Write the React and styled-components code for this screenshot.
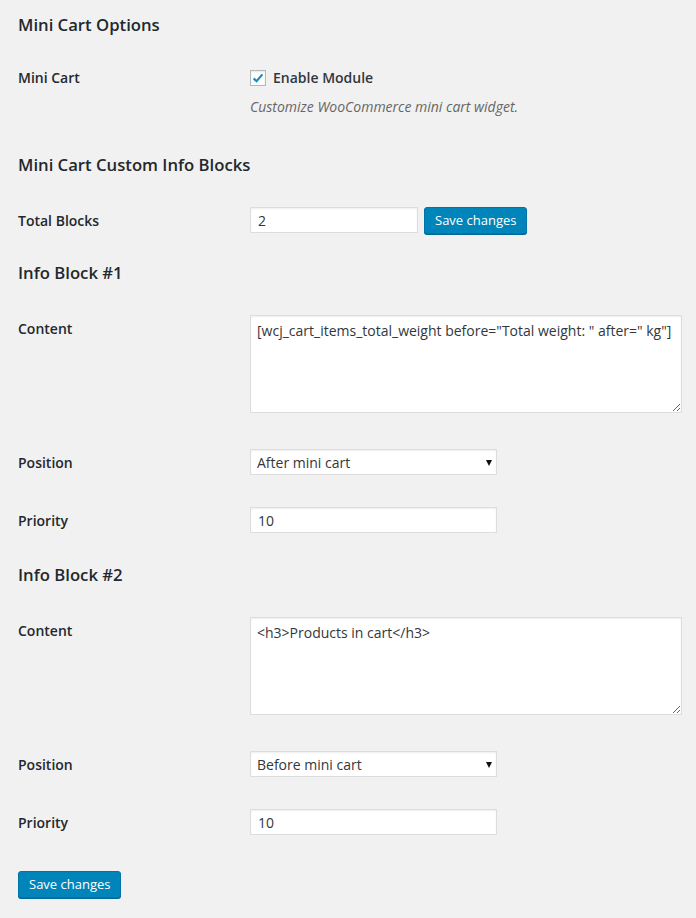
import React from 'react';
import styled, { createGlobalStyle } from 'styled-components';

const GlobalStyle = createGlobalStyle`
    html, body {
        margin: 0;
        padding: 0;
        background: #f1f1f1;
    }
    body {
        font-family: "Open Sans", "Liberation Sans", sans-serif;
        color: #23282d;
    }
`

const Page = styled.div`
    width: 696px;
    min-height: 918px;
    box-sizing: border-box;
    padding: 0 0 0 18px;
`

const Heading = styled.h2`
    margin: ${p => p.$top}px 0 ${p => p.$bottom}px;
    font-size: 16.7px;
    font-weight: 600;
    line-height: 22px;
    color: #23282d;
`

const Row = styled.div`
    display: grid;
    grid-template-columns: 232px 1fr;
    min-height: 58px;
`

const Label = styled.div`
    padding: ${p => p.$pad || 20}px 0 20px;
    font-size: 14px;
    font-weight: 600;
    line-height: 18px;
`

const Field = styled.div`
    padding: ${p => p.$pad || 15}px 0 15px;
    display: flex;
    flex-direction: column;
    align-items: flex-start;
`

const Inline = styled.div`
    display: flex;
    align-items: flex-start;
    gap: 6px;
`

const CheckLabel = styled.label`
    display: flex;
    align-items: center;
    gap: 7px;
    font-size: 14px;
    line-height: 18px;
    font-weight: 600;
    color: #32373c;
`

const Box = styled.span`
    width: 16px;
    height: 16px;
    box-sizing: border-box;
    border: 1px solid #b4b9be;
    background: #fff;
    box-shadow: inset 0 1px 2px rgba(0,0,0,.1);
    display: flex;
    align-items: center;
    justify-content: center;
`

const Description = styled.p`
    margin: 11px 0 0;
    font-size: 14px;
    line-height: 18px;
    font-style: italic;
    color: #666;
`

const Input = styled.input`
    width: ${p => p.$w}px;
    height: 26px;
    box-sizing: border-box;
    margin: 0;
    padding: 0 7px;
    border: 1px solid #ddd;
    background: #fff;
    box-shadow: inset 0 1px 2px rgba(0,0,0,.07);
    font-family: inherit;
    font-size: 14px;
    color: #32373c;
    outline: none;
`

const TextArea = styled.textarea`
    display: block;
    width: 432px;
    height: 98px;
    box-sizing: border-box;
    margin: 0 0 6px;
    padding: 5px 6px;
    border: 1px solid #ddd;
    background: #fff;
    box-shadow: inset 0 1px 2px rgba(0,0,0,.07);
    font-family: inherit;
    font-size: 14px;
    line-height: 20px;
    color: #32373c;
    outline: none;
`

const SelectWrap = styled.div`
    position: relative;
    width: 247px;
    &::after {
        content: "";
        position: absolute;
        right: 5px;
        top: 11px;
        border-left: 3.5px solid transparent;
        border-right: 3.5px solid transparent;
        border-top: 6px solid #111;
        pointer-events: none;
    }
`

const Select = styled.select`
    appearance: none;
    width: 247px;
    height: 26px;
    box-sizing: border-box;
    margin: 0;
    padding: 0 6px;
    border: 1px solid #ddd;
    border-radius: 0;
    background: #fff;
    box-shadow: inset 0 1px 2px rgba(0,0,0,.07);
    font-family: inherit;
    font-size: 14px;
    color: #32373c;
    outline: none;
`

const Button = styled.button`
    height: 27px;
    box-sizing: border-box;
    margin: ${p => p.$top || 0}px 0 0;
    padding: 0 10px 1px;
    border: 1px solid #0073aa;
    border-radius: 3px;
    background: #0085ba;
    box-shadow: 0 1px 0 #006799;
    color: #fff;
    font-family: inherit;
    font-size: 13px;
    line-height: 24px;
    cursor: pointer;
`

const Check = () => (
    <svg width="12" height="12" viewBox="0 0 12 12">
        <path d="M1.6 6.4 L4.6 9.2 L10.4 2.4" fill="none" stroke="#1e8cbe" strokeWidth="2.2" />
    </svg>
)

function InfoBlock({ num, content, position, top }) {
    return (
        <>
            <Heading $top={top} $bottom={16}>Info Block #{num}</Heading>
            <Row>
                <Label>Content</Label>
                <Field>
                    <TextArea defaultValue={content} />
                </Field>
            </Row>
            <Row>
                <Label>Position</Label>
                <Field>
                    <SelectWrap>
                        <Select defaultValue={position}>
                            <option>Before mini cart</option>
                            <option>After mini cart</option>
                        </Select>
                    </SelectWrap>
                </Field>
            </Row>
            <Row>
                <Label>Priority</Label>
                <Field>
                    <Input $w={247} defaultValue="10" />
                </Field>
            </Row>
        </>
    )
}

export default function App() {
    return (
        <Page>
            <GlobalStyle />
            <Heading $top={14} $bottom={13}>Mini Cart Options</Heading>
            <Row>
                <Label>Mini Cart</Label>
                <Field $pad={20}>
                    <CheckLabel>
                        <Box><Check /></Box>
                        Enable Module
                    </CheckLabel>
                    <Description>Customize WooCommerce mini cart widget.</Description>
                </Field>
            </Row>
            <Heading $top={23} $bottom={16}>Mini Cart Custom Info Blocks</Heading>
            <Row>
                <Label>Total Blocks</Label>
                <Field>
                    <Inline>
                        <Input $w={168} defaultValue="2" />
                        <Button>Save changes</Button>
                    </Inline>
                </Field>
            </Row>
            <InfoBlock num={1} top={12} position="After mini cart"
                content={'[wcj_cart_items_total_weight before="Total weight: " after=" kg"]'} />
            <InfoBlock num={2} top={14} position="Before mini cart"
                content="<h3>Products in cart</h3>" />
            <Button $top={19}>Save changes</Button>
        </Page>
    )
}
